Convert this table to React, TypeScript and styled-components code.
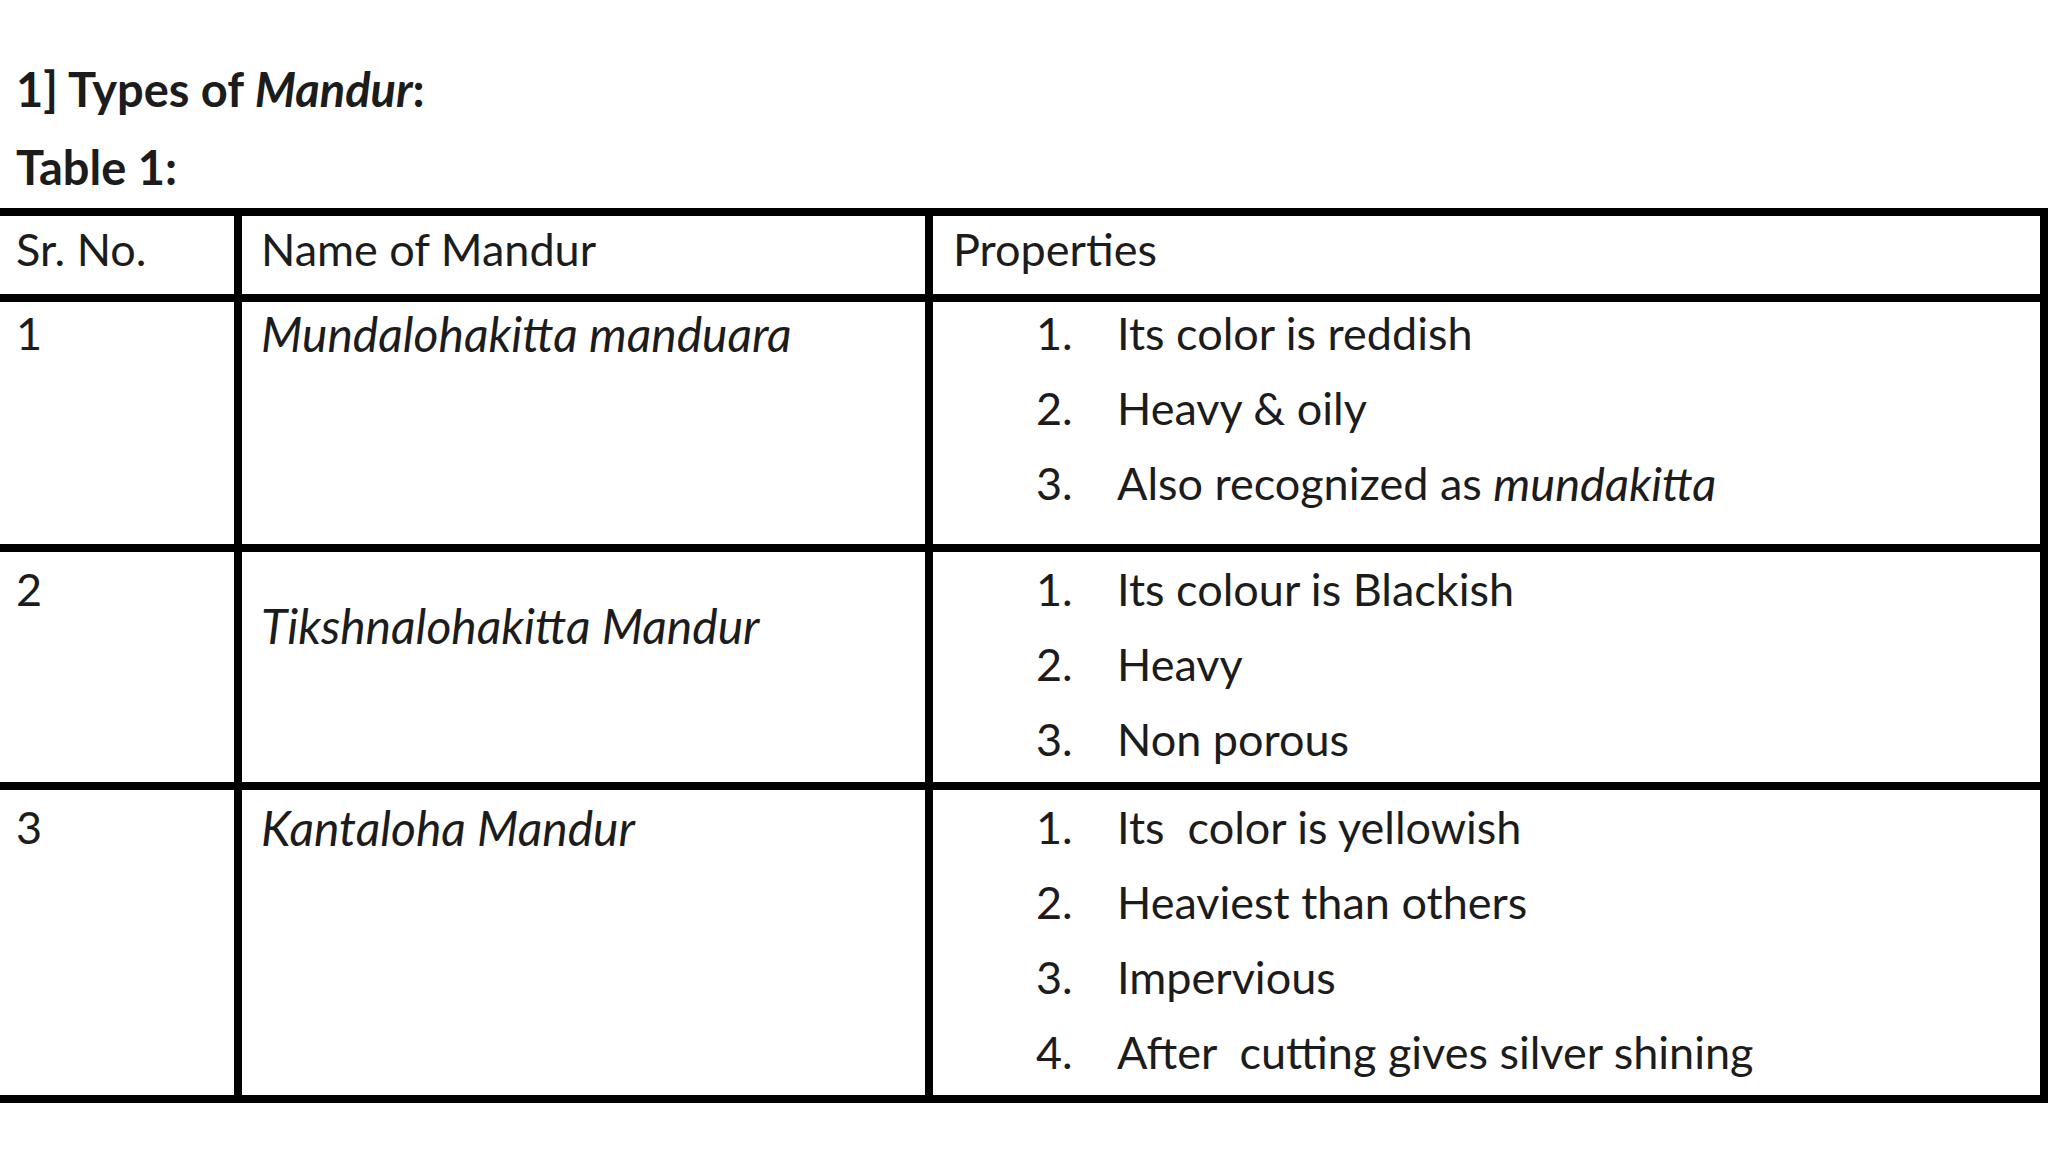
import React from 'react';
import styled, {createGlobalStyle} from 'styled-components';

const GlobalStyle = createGlobalStyle`
  html, body {
    margin: 0;
    padding: 0;
    background: #ffffff;
  }
  body {
    font-family: Lato, "Open Sans", "Liberation Sans", sans-serif;
    color: #1c1c1c;
  }
`;

const Page = styled.div`
  width: 2048px;
  height: 1152px;
  overflow: hidden;
  background: #fff;
  padding-top: 58px;
  box-sizing: border-box;
`;

const Heading = styled.div`
  font-size: 47px;
  font-weight: 700;
  line-height: 62px;
  padding-left: 16px;
  height: 62px;
  em {
    font-style: italic;
  }
`;

const Caption = styled(Heading)`
  margin-top: 16px;
  height: 72px;
`;

const Grid = styled.div`
  display: grid;
  grid-template-columns: 234px 683px 1fr;
  grid-template-rows: 78px 242px 230px 305px;
  gap: 8px;
  padding: 8px 8px 8px 0;
  background: #000;
`;

// $shift moves the first line: positive pads down, negative tightens the line box
const Cell = styled.div<{$pad: number; $shift?: number}>`
  background: #fff;
  padding-left: ${p => p.$pad}px;
  padding-top: ${p => Math.max(0, p.$shift || 0)}px;
  font-size: 45px;
  line-height: ${p => 75 + 2 * Math.min(0, p.$shift || 0)}px;
  box-sizing: border-box;
`;

const HeadCell = styled(Cell)`
  line-height: 66px;
`;

const Name = styled.span`
  font-style: italic;
  font-size: 48px;
`;

const List = styled.ol<{$shift: number}>`
  margin: ${p => p.$shift}px 0 0;
  padding: 0 0 0 103px;
  list-style: none;
`;

const Item = styled.li`
  display: flex;
  height: 75px;
  line-height: 75px;
  white-space: pre;
`;

const Num = styled.span`
  width: 81px;
  flex: none;
`;

const Em = styled.i`
  font-size: 47px;
`;

interface Row {
  no: string;
  name: string;
  nameShift: number;
  shift: number;
  props: React.ReactNode[];
}

const rows: Row[] = [
  {
    no: '1',
    name: 'Mundalohakitta manduara',
    nameShift: -6,
    shift: -6,
    props: [
      'Its color is reddish',
      'Heavy & oily',
      <>Also recognized as <Em>mundakitta</Em></>
    ]
  },
  {
    no: '2',
    name: 'Tikshnalohakitta Mandur',
    nameShift: 36,
    shift: 0,
    props: ['Its colour is Blackish', 'Heavy', 'Non porous']
  },
  {
    no: '3',
    name: 'Kantaloha Mandur',
    nameShift: 0,
    shift: 0,
    props: [
      'Its  color is yellowish',
      'Heaviest than others',
      'Impervious',
      'After  cutting gives silver shining'
    ]
  }
];

export default function App() {
  return (
    <Page>
      <GlobalStyle/>
      <Heading>1] Types of <em>Mandur</em>:</Heading>
      <Caption>Table 1:</Caption>
      <Grid>
        <HeadCell $pad={16}>Sr. No.</HeadCell>
        <HeadCell $pad={19}>Name of Mandur</HeadCell>
        <HeadCell $pad={20}>Properties</HeadCell>
        {rows.map(row => (
          <React.Fragment key={row.no}>
            <Cell $pad={16} $shift={row.shift}>{row.no}</Cell>
            <Cell $pad={19} $shift={row.nameShift}><Name>{row.name}</Name></Cell>
            <Cell $pad={0}>
              <List $shift={row.shift}>
                {row.props.map((p, i) => (
                  <Item key={i}><Num>{i + 1}.</Num>{p}</Item>
                ))}
              </List>
            </Cell>
          </React.Fragment>
        ))}
      </Grid>
    </Page>
  );
}
